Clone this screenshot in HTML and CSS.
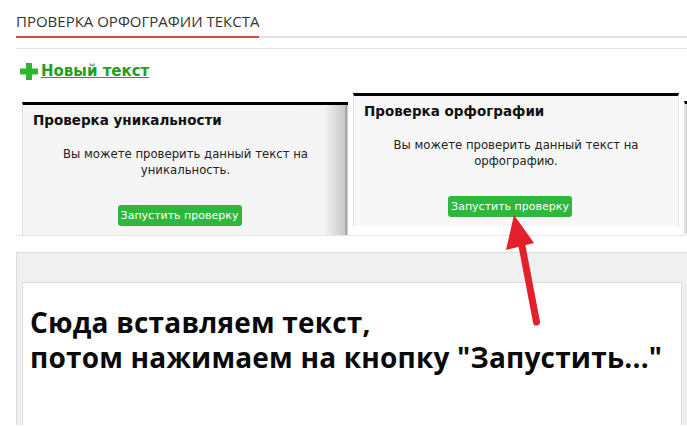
FILE: index.html
```html
<!DOCTYPE html>
<html>
<head>
    <meta charset="UTF-8">
    <title>Проверка орфографии текста</title>
    <link rel="stylesheet" href="styles.css">
</head>
<body>
    <!-- заголовок страницы -->
    <div class="page-head">
        <span>ПРОВЕРКА ОРФОГРАФИИ ТЕКСТА</span>
    </div>

    <div class="toolbar">
        <a class="new-link" href="#">
            <svg class="plus" width="18" height="17" viewBox="0 0 18 17">
                <path d="M6 0h6v5.5h6v6h-6V17H6v-5.5H0v-6h6z" fill="#2eb52e"/>
            </svg>
            <span>Новый текст</span>
        </a>
    </div>

    <!-- карусель проверок -->
    <div class="checks">
        <div class="card card-side">
            <div class="card-title">Проверка уникальности</div>
            <div class="card-text">Вы можете проверить данный текст на уникальность.</div>
            <div class="card-btn"><button>Запустить проверку</button></div>
        </div>
        <div class="card card-active">
            <div class="card-title">Проверка орфографии</div>
            <div class="card-text">Вы можете проверить данный текст на орфографию.</div>
            <div class="card-btn"><button>Запустить проверку</button></div>
        </div>
        <div class="card card-next"></div>
    </div>

    <!-- поле для текста -->
    <div class="editor">
        <div class="editor-area">
            Сюда вставляем текст,<br>
            потом нажимаем на кнопку "Запустить..."
        </div>
    </div>

    <!-- стрелка-подсказка -->
    <svg class="arrow" width="687" height="426" viewBox="0 0 687 426">
        <line x1="536.5" y1="322" x2="522" y2="246" stroke="#e3212d" stroke-width="7" stroke-linecap="round"/>
        <polygon points="514,215 506,250 534,243" fill="#e3212d"/>
    </svg>
</body>
</html>
```

FILE: styles.css
```css
* { box-sizing: border-box; }

body {
    margin: 0;
    width: 687px;
    height: 426px;
    overflow: hidden;
    position: relative;
    background: #fff;
    color: #333;
    font-family: "DejaVu Sans", Verdana, sans-serif;
}

/* заголовок */
.page-head {
    margin-left: 16px;
    border-bottom: 2px solid #e2e2e2;
}

.page-head span {
    display: inline-block;
    padding: 11px 0 5px;
    margin-bottom: -2px;
    font: 15px/20px "Open Sans", sans-serif;
    color: #333;
    border-bottom: 2px solid #d4493d;
}

.toolbar {
    margin: 10px 0 0 16px;
    padding-top: 13px;
    border-top: 1px solid #e3e3e3;
}

.new-link {
    display: inline-flex;
    align-items: center;
    gap: 3px;
    margin-left: 4px;
    color: #22a022;
    font-weight: bold;
    font-size: 15px;
    line-height: 18px;
}

.plus { display: block; }

/* карточки */
.checks {
    display: flex;
    align-items: flex-start;
    gap: 5px;
    margin: 9px 0 0 16px;
    padding-left: 6px;
    height: 143px;
    overflow: hidden;
    border-bottom: 1px solid #e6e6e6;
}

.card {
    flex: none;
    width: 326px;
    height: 133px;
    border-top: 3px solid #000;
    border-left: 1px solid #dedede;
    background: #f5f5f5;
}

.card-side {
    margin-top: 9px;
    background: linear-gradient(to right, #f5f5f5 0, #f4f4f4 calc(100% - 24px), #c9c9c9 calc(100% - 3px), #8c8c8c calc(100% - 2px), #e4e4e4 100%);
}

.card-active {
    background: #f7f7f7;
    border-right: 1px solid #e4e4e4;
}

.card-next {
    margin-top: 8px;
    background: linear-gradient(to right, #e8e8e8, #999 6px);
}

.card-title {
    padding: 7px 10px 0;
    font-size: 13.5px;
    font-weight: bold;
    line-height: 16px;
    color: #111;
}

.card-text {
    margin: 18px auto 0;
    width: 280px;
    text-align: center;
    font-size: 11.7px;
    line-height: 16px;
    color: #222;
}

.card-btn {
    margin-top: 26px;
    padding-right: 12px;
    text-align: center;
}

.card-btn button {
    width: 124px;
    height: 21px;
    padding: 0;
    border: 0;
    border-radius: 3px;
    background: #2db83d;
    color: #fff;
    font: 11px/21px "DejaVu Sans", sans-serif;
}

/* поле ввода */
.editor {
    margin: 16px 0 0 16px;
    padding: 29px 5px 0 5px;
    height: 173px;
    background: #f0f0f0;
    border: 1px solid #ddd;
    border-right: 0;
    border-bottom: 0;
}

.editor-area {
    height: 100%;
    padding: 22px 7px 0;
    background: #fff;
    border: 1px solid #ddd;
    border-bottom: 0;
    font: bold 28px/35.5px "Open Sans", sans-serif;
    letter-spacing: 0.2px;
    color: #0a0a0a;
}

.arrow {
    position: absolute;
    left: 0;
    top: 0;
    pointer-events: none;
}
```
